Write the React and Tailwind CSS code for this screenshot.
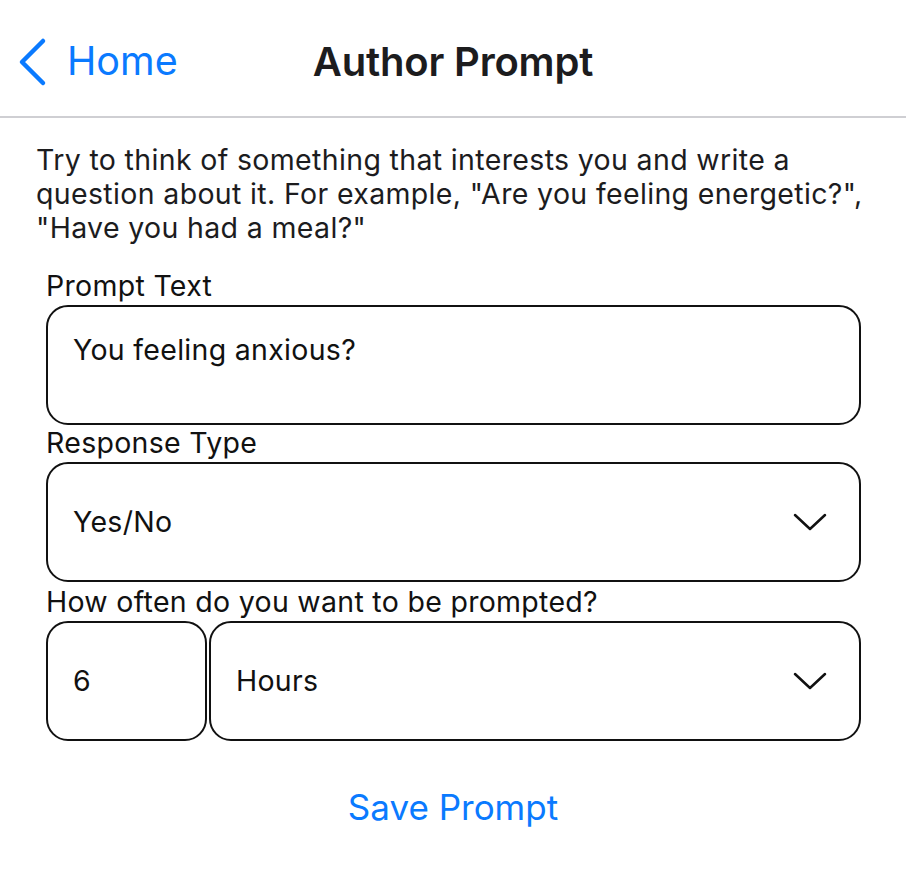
import React from "react";

function ChevronDown() {
  return (
    <svg width="34" height="20" viewBox="0 0 34 20" fill="none">
      <path d="M2 3 L17 17 L32 3" stroke="#111" strokeWidth="2.5" strokeLinecap="round" strokeLinejoin="round" />
    </svg>
  );
}

export default function App() {
  return (
    <div
      className="w-[906px] h-[892px] bg-white text-[#111]"
      style={{ fontFamily: 'Inter, "Noto Sans", "Liberation Sans", sans-serif' }}
    >
      <div className="relative h-[118px] pt-[8px] flex items-center border-b-2 border-[#cfcfd3]">
        <div className="flex items-center pl-[16px] text-[#0a7aff]">
          <svg width="32" height="50" viewBox="0 0 32 50" fill="none">
            <path d="M27 4 L6 25 L27 46" stroke="#0a7aff" strokeWidth="4.5" strokeLinecap="round" strokeLinejoin="round" />
          </svg>
          <span className="ml-[19px] text-[39.5px] leading-none">Home</span>
        </div>
        <div className="absolute left-0 right-0 top-[8px] bottom-0 flex items-center justify-center pointer-events-none">
          <span className="text-[40px] font-semibold leading-none text-[#1c1c1e] tracking-[-0.2px]">Author Prompt</span>
        </div>
      </div>

      <p className="pl-[36px] pt-[25px] text-[28.5px] leading-[34px] text-[#1c1c1e] whitespace-nowrap tracking-[0.35px]">
        Try to think of something that interests you and write a
        <br />
        question about it. For example, "Are you feeling energetic?",
        <br />
        "Have you had a meal?"
      </p>

      <div className="pl-[46px] pr-[45px] pt-[25px] text-[28.5px] tracking-[0.3px]">
        <div className="leading-[32px] mb-[3px]">Prompt Text</div>
        <div className="h-[120px] border-2 border-[#111] rounded-[22px] pl-[25px] pt-[27px] leading-[32px]">
          You feeling anxious?
        </div>

        <div className="leading-[32px] mt-[2px] mb-[3px]">Response Type</div>
        <div className="h-[120px] border-2 border-[#111] rounded-[22px] pl-[25px] pr-[32px] flex items-center justify-between">
          <span>Yes/No</span>
          <ChevronDown />
        </div>

        <div className="leading-[32px] mt-[4px] mb-[3px]">How often do you want to be prompted?</div>
        <div className="flex gap-[2px]">
          <div className="w-[161px] h-[120px] border-2 border-[#111] rounded-[22px] pl-[25px] flex items-center">
            6
          </div>
          <div className="flex-1 h-[120px] border-2 border-[#111] rounded-[22px] pl-[25px] pr-[32px] flex items-center justify-between">
            <span>Hours</span>
            <ChevronDown />
          </div>
        </div>
      </div>

      <div className="flex justify-center pt-[46px]">
        <span className="text-[35px] leading-[40px] text-[#0a7aff]">Save Prompt</span>
      </div>
    </div>
  );
}
